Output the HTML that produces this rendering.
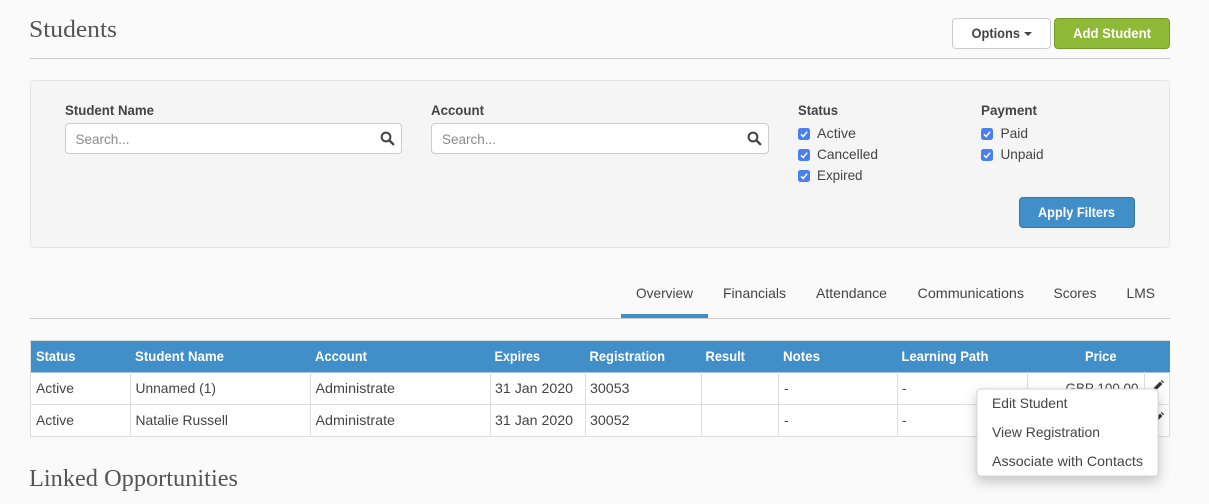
<!DOCTYPE html>
<html><head><meta charset="utf-8"><style>
html,body{margin:0;padding:0;background:#fafafa;width:1209px;height:504px;overflow:hidden}
svg{display:block}
text{font-family:"Liberation Sans",sans-serif;font-size:14px;fill:#444}
.b{font-weight:bold}
.w{fill:#fff;font-weight:bold}
.s{font-family:"Liberation Serif",serif;font-size:24px;fill:#555}
.p{fill:#8a8a8a}
</style></head><body>
<svg width="1209" height="504" viewBox="0 0 1209 504" xmlns="http://www.w3.org/2000/svg">
<defs>
<filter id="sh" x="-20%" y="-30%" width="140%" height="170%"><feDropShadow dx="0" dy="5" stdDeviation="6" flood-color="#000" flood-opacity=".22"/></filter>
<g id="cb"><rect width="12" height="12" rx="2.5" fill="#4a80ee"/><path d="M3 6.3l2.2 2.2 3.9-4.8" fill="none" stroke="#fff" stroke-width="1.5"/></g>
<g id="sr"><circle cx="6" cy="6" r="4.4" fill="none" stroke="#444" stroke-width="2"/><path d="M9.2 9.2l4 4" stroke="#444" stroke-width="2.4" stroke-linecap="round"/></g>
<g id="pen"><path d="M0 11l1-3.4 6-6 2.4 2.4-6 6z" fill="#333"/><path d="M7.8.8l1-.8 2.2 2.2-.8 1z" fill="#333"/></g>
</defs>

<text class="s" x="29" y="37" textLength="88" lengthAdjust="spacingAndGlyphs">Students</text>
<rect x="952.5" y="18.5" width="98" height="30" rx="3.5" fill="#fff" stroke="#ccc"/>
<text x="971.5" y="38" textLength="48.5" lengthAdjust="spacingAndGlyphs" style="font-weight:bold;fill:#444">Options</text>
<path d="M1024 32h8l-4 4z" fill="#444"/>
<rect x="1054.5" y="18.5" width="115" height="30" rx="3.5" fill="#8fba38" stroke="#76992e"/>
<text class="w" x="1073" y="38" textLength="78" lengthAdjust="spacingAndGlyphs">Add Student</text>
<rect x="30" y="58" width="1140" height="1" fill="#ccc"/>

<rect x="30.5" y="80.5" width="1139" height="167" rx="3.5" fill="#f5f5f5" stroke="#e5e5e5"/>
<text class="b" x="65" y="115" textLength="89" lengthAdjust="spacingAndGlyphs">Student Name</text>
<text class="b" x="431" y="115" textLength="53" lengthAdjust="spacingAndGlyphs">Account</text>
<text class="b" x="798" y="115" textLength="40" lengthAdjust="spacingAndGlyphs">Status</text>
<text class="b" x="981" y="115" textLength="56" lengthAdjust="spacingAndGlyphs">Payment</text>

<rect x="65.5" y="123.5" width="336" height="30" rx="3.5" fill="#fff" stroke="#ccc"/>
<text class="p" x="75.5" y="144" textLength="54" lengthAdjust="spacingAndGlyphs">Search...</text>
<use href="#sr" x="380" y="131"/>
<rect x="431.5" y="123.5" width="337" height="30" rx="3.5" fill="#fff" stroke="#ccc"/>
<text class="p" x="442" y="144" textLength="54" lengthAdjust="spacingAndGlyphs">Search...</text>
<use href="#sr" x="747" y="131"/>

<use href="#cb" x="798" y="128"/><text x="817" y="138" textLength="39" lengthAdjust="spacingAndGlyphs">Active</text>
<use href="#cb" x="798" y="149"/><text x="817" y="159" textLength="61" lengthAdjust="spacingAndGlyphs">Cancelled</text>
<use href="#cb" x="798" y="170"/><text x="817" y="180" textLength="45.5" lengthAdjust="spacingAndGlyphs">Expired</text>
<use href="#cb" x="981" y="128"/><text x="1000.5" y="138" textLength="27.5" lengthAdjust="spacingAndGlyphs">Paid</text>
<use href="#cb" x="981" y="149"/><text x="1000.5" y="159" textLength="43" lengthAdjust="spacingAndGlyphs">Unpaid</text>

<rect x="1019.5" y="197.5" width="115" height="30" rx="3.5" fill="#418fc9" stroke="#37779f"/>
<text class="w" x="1038" y="217" textLength="77" lengthAdjust="spacingAndGlyphs">Apply Filters</text>

<text x="636" y="298" textLength="57" lengthAdjust="spacingAndGlyphs">Overview</text>
<text x="723" y="298" textLength="63" lengthAdjust="spacingAndGlyphs">Financials</text>
<text x="816" y="298" textLength="71" lengthAdjust="spacingAndGlyphs">Attendance</text>
<text x="917.5" y="298" textLength="106.500" lengthAdjust="spacingAndGlyphs">Communications</text>
<text x="1053.500" y="298" textLength="43" lengthAdjust="spacingAndGlyphs">Scores</text>
<text x="1126.500" y="298" textLength="28.500" lengthAdjust="spacingAndGlyphs">LMS</text>
<rect x="30" y="318" width="1140" height="1" fill="#ccc"/>
<rect x="621" y="314" width="87" height="4" fill="#418fc9"/>

<rect x="30" y="340" width="1140" height="97" fill="#fff"/>
<rect x="30" y="340" width="1140" height="1" fill="#ddd"/>
<rect x="31" y="341" width="1139" height="31.500" fill="#418fc9"/>
<path d="M30.500 341V436.500H1169.500V372M31 404.500H1169M130.500 372V436M310.500 372V436M490.500 372V436M585.500 372V436M701.500 372V436M778.500 372V436M897.500 372V436M1027.500 372V436M1144.500 372V436" fill="none" stroke="#ddd"/>
<text class="w" x="36" y="361" textLength="39.500" lengthAdjust="spacingAndGlyphs">Status</text>
<text class="w" x="135" y="361" textLength="89" lengthAdjust="spacingAndGlyphs">Student Name</text>
<text class="w" x="315" y="361" textLength="52" lengthAdjust="spacingAndGlyphs">Account</text>
<text class="w" x="494.500" y="361" textLength="45.500" lengthAdjust="spacingAndGlyphs">Expires</text>
<text class="w" x="589.500" y="361" textLength="75.500" lengthAdjust="spacingAndGlyphs">Registration</text>
<text class="w" x="705.500" y="361" textLength="39.500" lengthAdjust="spacingAndGlyphs">Result</text>
<text class="w" x="783" y="361" textLength="37" lengthAdjust="spacingAndGlyphs">Notes</text>
<text class="w" x="901.500" y="361" textLength="87" lengthAdjust="spacingAndGlyphs">Learning Path</text>
<text class="w" x="1085" y="361" textLength="31.500" lengthAdjust="spacingAndGlyphs">Price</text>

<text x="36" y="393" textLength="38" lengthAdjust="spacingAndGlyphs">Active</text>
<text x="135.500" y="393" textLength="80.500" lengthAdjust="spacingAndGlyphs">Unnamed (1)</text>
<text x="315.500" y="393" textLength="79.500" lengthAdjust="spacingAndGlyphs">Administrate</text>
<text x="495" y="393" textLength="78" lengthAdjust="spacingAndGlyphs">31 Jan 2020</text>
<text x="590" y="393" textLength="39.500" lengthAdjust="spacingAndGlyphs">30053</text>
<text x="784" y="393">-</text>
<text x="902" y="393">-</text>
<text x="1065.500" y="393" textLength="73" lengthAdjust="spacingAndGlyphs">GBP 100.00</text>
<use href="#pen" x="1153" y="380"/>

<text x="36" y="425" textLength="38" lengthAdjust="spacingAndGlyphs">Active</text>
<text x="135.500" y="425" textLength="92.500" lengthAdjust="spacingAndGlyphs">Natalie Russell</text>
<text x="315.500" y="425" textLength="79.500" lengthAdjust="spacingAndGlyphs">Administrate</text>
<text x="495" y="425" textLength="78" lengthAdjust="spacingAndGlyphs">31 Jan 2020</text>
<text x="590" y="425" textLength="39.500" lengthAdjust="spacingAndGlyphs">30052</text>
<text x="784" y="425">-</text>
<text x="902" y="425">-</text>
<use href="#pen" x="1153" y="412"/>

<rect x="977" y="389" width="181" height="87" rx="3.500" fill="#fff" stroke="#d4d4d4" filter="url(#sh)"/>
<text x="992" y="408" textLength="75.500" lengthAdjust="spacingAndGlyphs">Edit Student</text>
<text x="992" y="437" textLength="108" lengthAdjust="spacingAndGlyphs">View Registration</text>
<text x="992" y="466" textLength="151" lengthAdjust="spacingAndGlyphs">Associate with Contacts</text>

<text class="s" x="29" y="486" textLength="209" lengthAdjust="spacingAndGlyphs">Linked Opportunities</text>
</svg>
</body></html>
